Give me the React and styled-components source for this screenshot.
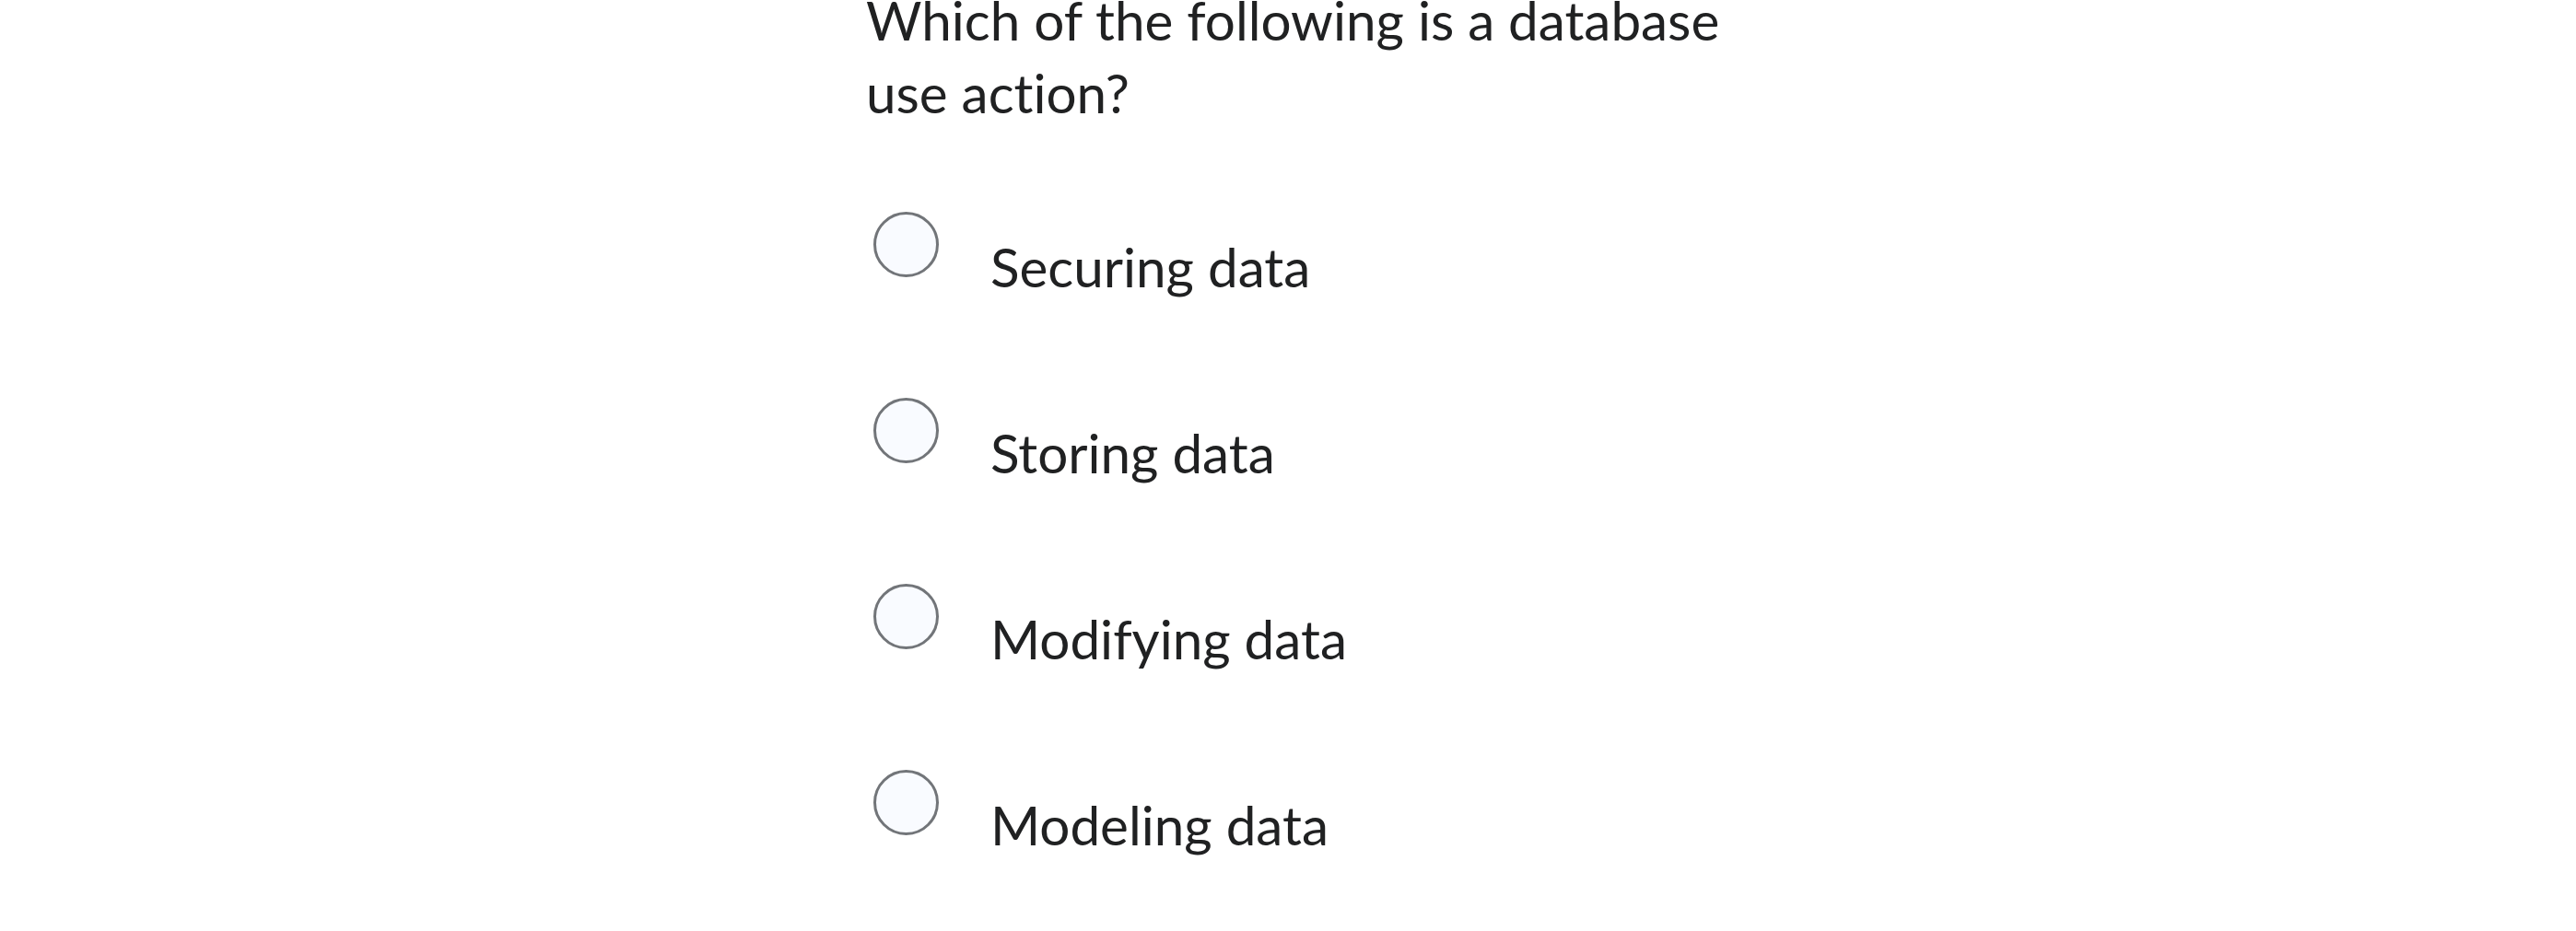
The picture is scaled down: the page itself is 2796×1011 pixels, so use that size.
import React from "react";
import styled, { createGlobalStyle } from "styled-components";

const Global = createGlobalStyle`
  html, body {
    margin: 0;
    padding: 0;
    background: #ffffff;
  }
  body {
    font-family: Lato, "Noto Sans", "Liberation Sans", sans-serif;
    color: #202122;
    font-variant-ligatures: none;
    font-feature-settings: "liga" 0, "clig" 0;
  }
`;

const Page = styled.main`
  width: 2796px;
  height: 1011px;
  overflow: hidden;
  box-sizing: border-box;
  padding-left: 940px;
`;

const Question = styled.section`
  width: 960px;
  margin-top: -18px;
  display: flex;
  flex-direction: column;
`;

const Prompt = styled.p`
  margin: 0;
  font-size: 58.4px;
  line-height: 79px;
  font-weight: 400;
  color: #202122;
`;

const Options = styled.fieldset`
  margin: 90px 0 0 0;
  padding: 0;
  border: 0;
  display: flex;
  flex-direction: column;
  gap: 103px;
`;

const Option = styled.label`
  display: flex;
  align-items: flex-start;
  gap: 56px;
  padding-left: 8px;
  cursor: pointer;
`;

const Radio = styled.input.attrs({ type: "radio" })`
  appearance: none;
  -webkit-appearance: none;
  margin: 0;
  flex: none;
  width: 71px;
  height: 71px;
  box-sizing: border-box;
  border-radius: 50%;
  border: 3px solid #727579;
  background: #f9fbff;
`;

const OptionText = styled.span`
  padding-top: 20px;
  font-size: 58.4px;
  line-height: 79px;
  color: #202122;
`;

const options = ["Securing data", "Storing data", "Modifying data", "Modeling data"];

export default function App() {
  return (
    <>
      <Global />
      <Page>
        <Question>
          <Prompt>Which of the following is a database use action?</Prompt>
          <Options>
            {options.map((o) => (
              <Option key={o}>
                <Radio name="q1" />
                <OptionText>{o}</OptionText>
              </Option>
            ))}
          </Options>
        </Question>
      </Page>
    </>
  );
}
